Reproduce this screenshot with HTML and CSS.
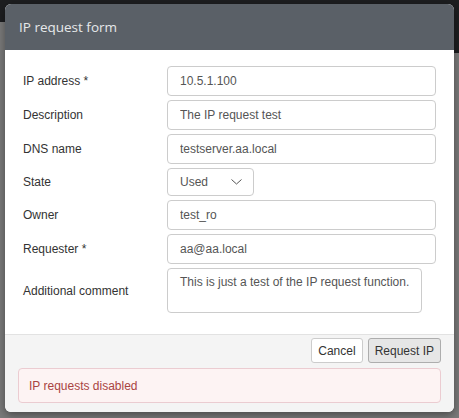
FILE: index.html
```html
<!DOCTYPE html>
<html>
<head>
<meta charset="utf-8">
<link rel="stylesheet" href="styles.css">
</head>
<body>
<div class="modal">
  <div class="modal-header">IP request form</div>
  <div class="modal-body">
    <div class="form-grid">
      <label class="lbl">IP address *</label>
      <input class="ctl" type="text" value="10.5.1.100">
      <label class="lbl">Description</label>
      <input class="ctl" type="text" value="The IP request test">
      <label class="lbl">DNS name</label>
      <input class="ctl" type="text" value="testserver.aa.local">
      <label class="lbl">State</label>
      <div class="select-wrap">
        <select class="sel"><option>Used</option></select>
        <svg class="chev" width="11" height="6" viewBox="0 0 11 6"><path d="M0.5 0.5 L5.5 5 L10.5 0.5" fill="none" stroke="#555" stroke-width="1"/></svg>
      </div>
      <label class="lbl">Owner</label>
      <input class="ctl" type="text" value="test_ro">
      <label class="lbl">Requester *</label>
      <input class="ctl" type="text" value="aa@aa.local">
      <label class="lbl">Additional comment</label>
      <textarea class="ta">This is just a test of the IP request function.</textarea>
    </div>
  </div>
  <div class="modal-footer">
    <div class="btns">
      <button class="btn">Cancel</button>
      <button class="btn btn-primary">Request IP</button>
    </div>
    <div class="alert">IP requests disabled</div>
  </div>
</div>
</body>
</html>
```

FILE: styles.css
```css
html, body {
  margin: 0;
  padding: 0;
}
body {
  width: 459px;
  height: 418px;
  overflow: hidden;
  font-family: "Liberation Sans", Arial, sans-serif;
  font-size: 12px;
  color: #333;
  background:
    linear-gradient(#1d1e20, #1d1e20) left top / 100% 22px no-repeat,
    linear-gradient(#1d1e20, #1d1e20) right top / 5px 53px no-repeat,
    #7a7a7a;
  padding-top: 4px;
  box-sizing: border-box;
}
.modal {
  margin: 0 5px;
  width: 449px;
  background: #fff;
  border-radius: 6px;
  box-shadow: 0 3px 9px rgba(0,0,0,0.4);
  overflow: hidden;
}
.modal-header {
  height: 46px;
  background: #5a6067;
  color: #e6e8ea;
  font-family: "Open Sans", sans-serif;
  font-size: 13.5px;
  display: flex;
  align-items: center;
  padding-left: 14px;
}
.modal-body {
  padding: 16px 18px 21px 18px;
}
.form-grid {
  display: grid;
  grid-template-columns: 144px 1fr;
  row-gap: 4px;
  align-items: center;
}
.lbl {
  color: #333;
  font-size: 12px;
}
.ctl, .ta, .sel {
  font-family: "Liberation Sans", Arial, sans-serif;
  font-size: 12px;
  color: #555;
  border: 1px solid #ccc;
  border-radius: 4px;
  box-sizing: border-box;
  background: #fff;
  outline: none;
}
.ctl {
  height: 30px;
  width: 100%;
  padding: 0 12px;
}
.select-wrap {
  position: relative;
  width: 87px;
  height: 28px;
}
.sel {
  appearance: none;
  -webkit-appearance: none;
  width: 87px;
  height: 28px;
  padding: 0 12px;
  margin: 0;
}
.chev {
  position: absolute;
  left: 64px;
  top: 11px;
  pointer-events: none;
}
.ta {
  width: 255px;
  height: 45px;
  padding: 6px 6px 6px 12px;
  resize: none;
  overflow: hidden;
  line-height: 1.2;
  display: block;
}
.modal-footer {
  background: #f4f4f4;
  border-top: 1px solid #e2e2e2;
  padding: 3px 13px 9px 13px;
}
.btns {
  display: flex;
  justify-content: flex-end;
  gap: 5px;
}
.btn {
  height: 25px;
  padding: 0 6px;
  font-family: "Liberation Sans", Arial, sans-serif;
  font-size: 12px;
  color: #333;
  background: #fff;
  border: 1px solid #ccc;
  border-radius: 3px;
}
.btn-primary {
  background: #e6e6e6;
  border-color: #adadad;
}
.alert {
  margin-top: 5px;
  height: 35px;
  box-sizing: border-box;
  display: flex;
  align-items: center;
  padding: 0 10px;
  background: #fdf3f3;
  border: 1px solid #ebccd1;
  border-radius: 4px;
  color: #a94442;
  font-size: 12px;
}
```
